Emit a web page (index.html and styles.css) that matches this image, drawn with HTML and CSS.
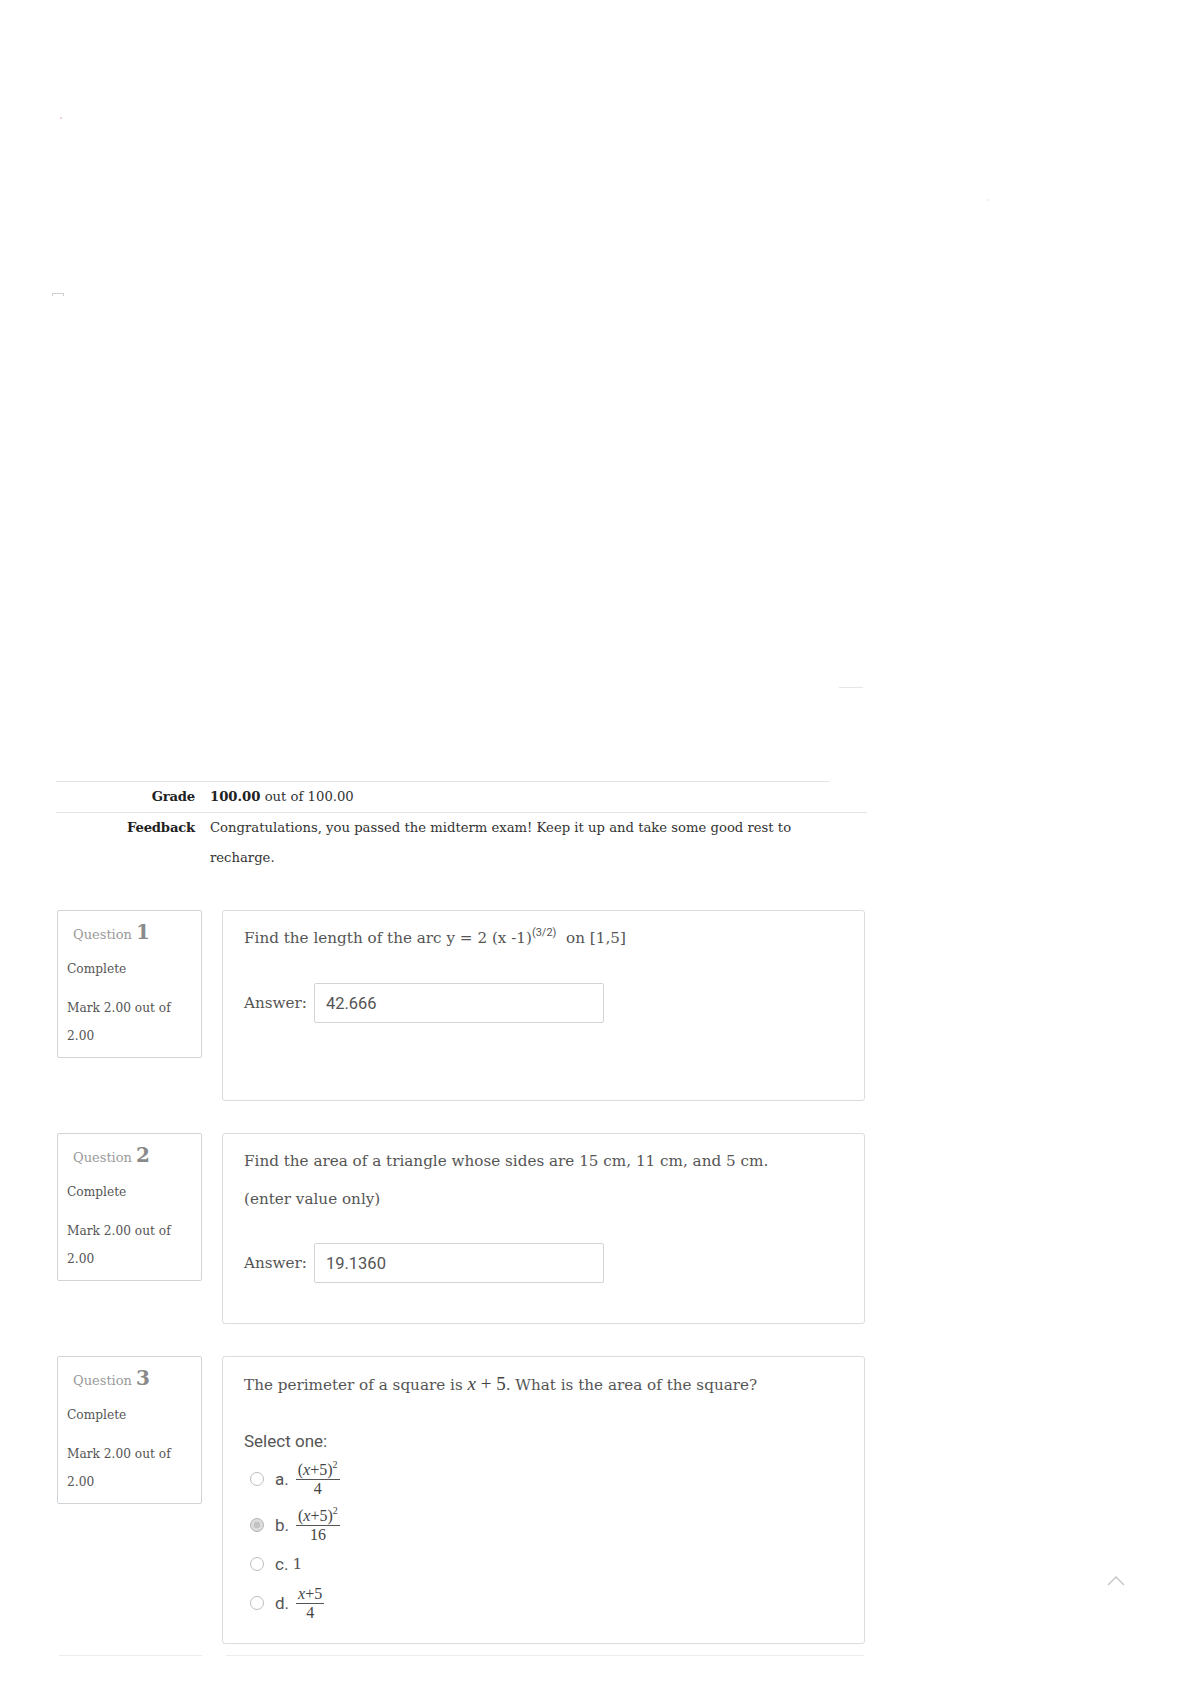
FILE: index.html
```html
<!DOCTYPE html>
<html lang="en">
<head>
<meta charset="utf-8">
<title>Quiz review</title>
<link rel="stylesheet" href="styles.css">
</head>
<body>
<div class="page">
  <div class="blank">
    <span class="mk mk-pink"></span>
    <span class="mk mk-dot"></span>
    <span class="mk mk-bracket"></span>
    <span class="mk mk-line"></span>
  </div>

  <div class="summary">
    <div class="summary-rule"></div>
    <div class="srow srow-first">
      <div class="sth">Grade</div>
      <div class="std"><b>100.00</b> out of 100.00</div>
    </div>
    <div class="srow">
      <div class="sth">Feedback</div>
      <div class="std">Congratulations, you passed the midterm exam! Keep it up and take some good rest to<br>recharge.</div>
    </div>
  </div>

  <div class="que">
    <div class="info">
      <h3 class="qno">Question <span class="qnum">1</span></h3>
      <div class="state">Complete</div>
      <div class="grade">Mark 2.00 out of<br>2.00</div>
    </div>
    <div class="content">
      <p class="qtext">Find the length of the arc y = 2 (x -1)<sup class="sup">(3/2)</sup>&nbsp; on [1,5]</p>
      <div class="answer">
        <span class="ans-label">Answer:</span>
        <div class="ans-input">42.666</div>
      </div>
    </div>
  </div>

  <div class="que">
    <div class="info">
      <h3 class="qno">Question <span class="qnum">2</span></h3>
      <div class="state">Complete</div>
      <div class="grade">Mark 2.00 out of<br>2.00</div>
    </div>
    <div class="content">
      <p class="qtext">Find the area of a triangle whose sides are 15 cm, 11 cm, and 5 cm.</p>
      <p class="qtext qtext-next">(enter value only)</p>
      <div class="answer answer-tight">
        <span class="ans-label">Answer:</span>
        <div class="ans-input">19.1360</div>
      </div>
    </div>
  </div>

  <div class="que">
    <div class="info">
      <h3 class="qno">Question <span class="qnum">3</span></h3>
      <div class="state">Complete</div>
      <div class="grade">Mark 2.00 out of<br>2.00</div>
    </div>
    <div class="content content-mc">
      <p class="qtext">The perimeter of a square is <span class="math"><i>x</i> + 5</span>. What is the area of the square?</p>
      <div class="prompt">Select one:</div>
      <div class="options">
        <div class="opt">
          <span class="radio"></span>
          <span class="optlbl">a.</span>
          <span class="frac"><span class="num">(<i>x</i>+5)<sup class="sq">2</sup></span><span class="den">4</span></span>
        </div>
        <div class="opt">
          <span class="radio radio-on"></span>
          <span class="optlbl">b.</span>
          <span class="frac"><span class="num">(<i>x</i>+5)<sup class="sq">2</sup></span><span class="den">16</span></span>
        </div>
        <div class="opt opt-plain">
          <span class="radio"></span>
          <span class="optlbl">c.</span>
          <span class="plainval">1</span>
        </div>
        <div class="opt">
          <span class="radio"></span>
          <span class="optlbl">d.</span>
          <span class="frac"><span class="num"><i>x</i>+5</span><span class="den">4</span></span>
        </div>
      </div>
    </div>
  </div>

  <div class="tail">
    <div class="tail-a"></div>
    <div class="tail-b"></div>
  </div>
</div>

<a class="backtop" href="#" aria-label="Back to top">
  <svg width="20" height="14" viewBox="0 0 20 14"><polyline points="2,12 10,4 18,12" fill="none" stroke="#c4c4c4" stroke-width="1.4"/></svg>
</a>
</body>
</html>
```

FILE: styles.css
```css
html, body {
  margin: 0;
  padding: 0;
  background: #fff;
}

body {
  font-family: "DejaVu Serif", "Liberation Serif", serif;
  color: #444;
}

.page {
  margin-left: 56px;
  width: 811px;
}

/* blank header area with stray marks */
.blank {
  position: relative;
  height: 781px;
}

.mk {
  position: absolute;
  display: block;
}

.mk-pink {
  left: 4px;
  top: 117px;
  width: 2px;
  height: 2px;
  background: #f1cfd6;
}

.mk-dot {
  left: 931px;
  top: 199px;
  width: 2px;
  height: 2px;
  background: #efefef;
}

.mk-bracket {
  left: -4px;
  top: 293px;
  width: 10px;
  height: 2px;
  border: 1px solid #cfcfcf;
  border-bottom: none;
}

.mk-line {
  left: 783px;
  top: 687px;
  width: 24px;
  height: 1px;
  background: #e6e6e6;
}

/* summary table */
.summary {
  font-size: 13.2px;
  color: #333;
}

.summary-rule {
  width: 773px;
  border-top: 1px solid #e3e3e3;
}

.srow {
  display: flex;
  line-height: 30px;
}

.srow-first {
  border-bottom: 1px solid #e3e3e3;
}

.sth {
  width: 139px;
  flex: none;
  text-align: right;
  font-weight: bold;
  color: #222;
  letter-spacing: -0.2px;
}

.std {
  padding-left: 15px;
}

.std b {
  color: #222;
}

/* question blocks */
.que {
  display: flex;
  gap: 20px;
  margin-top: 32px;
}

.summary + .que {
  margin-top: 37px;
}

.info {
  width: 145px;
  flex: none;
  box-sizing: border-box;
  margin-left: 1px;
  border: 1px solid #cfd4d9;
  border-radius: 2px;
  padding: 6px 9px 7px;
  align-self: flex-start;
  font-size: 12.2px;
  color: #555;
}

.qno {
  margin: 0;
  padding-left: 6px;
  line-height: 30px;
  font-size: 13px;
  font-weight: normal;
  color: #9a9a9a;
}

.qnum {
  font-size: 20px;
  font-weight: bold;
  color: #8a8a8a;
}

.state {
  margin-top: 5px;
  line-height: 28px;
}

.grade {
  margin-top: 11px;
  line-height: 28px;
}

.content {
  width: 643px;
  box-sizing: border-box;
  min-height: 191px;
  border: 1px solid #dcdcdc;
  border-radius: 3px;
  padding: 12px 20px 16px 21px;
  font-size: 15.2px;
  color: #555;
}

.content-mc {
  padding-bottom: 17px;
}

.qtext {
  margin: 0;
  line-height: 30px;
}

.qtext-next {
  margin-top: 8px;
}

.sup {
  font-family: Roboto, "Liberation Sans", sans-serif;
  font-size: 11px;
  line-height: 0;
  vertical-align: 7px;
}

.math {
  font-family: "Liberation Serif", serif;
  font-size: 19px;
  color: #444;
}

.answer {
  display: flex;
  align-items: center;
  margin-top: 30px;
}

.answer-tight {
  margin-top: 29px;
}

.ans-label {
  line-height: 30px;
}

.ans-input {
  width: 290px;
  height: 40px;
  box-sizing: border-box;
  margin-left: 7px;
  border: 1px solid #d4d4d4;
  border-radius: 2px;
  padding: 0 11px;
  display: flex;
  align-items: center;
  font-family: Roboto, "Liberation Sans", sans-serif;
  font-size: 16.5px;
  color: #555;
}

.prompt {
  margin-top: 26px;
  line-height: 30px;
  font-family: Roboto, "Liberation Sans", sans-serif;
  font-size: 17px;
  color: #555;
}

.opt {
  display: flex;
  align-items: center;
  height: 46px;
}

.opt-plain {
  height: 32px;
}

.radio {
  width: 14px;
  height: 14px;
  box-sizing: border-box;
  flex: none;
  margin-left: 6px;
  margin-right: 11px;
  border: 1px solid #bdbdbd;
  border-radius: 50%;
  background: #fff;
}

.radio-on {
  border-color: #b3b3b3;
  background: radial-gradient(circle, #c2c2c2 0 3px, #dcdcdc 3.6px);
}

.optlbl {
  font-family: Roboto, "Liberation Sans", sans-serif;
  font-size: 17px;
  color: #555;
  margin-right: 7px;
}

.plainval {
  font-size: 15.5px;
  margin-left: -3px;
}

.frac {
  display: inline-flex;
  flex-direction: column;
  align-items: center;
  font-family: "Liberation Serif", serif;
  font-size: 16px;
  color: #444;
}

.num {
  padding: 0 2px 1px;
  border-bottom: 1px solid #555;
  line-height: 16px;
}

.den {
  line-height: 17px;
}

.sq {
  font-size: 10px;
  line-height: 0;
  vertical-align: 7px;
}

/* partial next question edges */
.tail {
  display: flex;
  margin-top: 11px;
}

.tail-a {
  width: 143px;
  margin-left: 3px;
  border-top: 1px solid #ececec;
}

.tail-b {
  width: 638px;
  margin-left: 24px;
  border-top: 1px solid #ececec;
}

.backtop {
  position: fixed;
  left: 1106px;
  top: 1573px;
  display: block;
  width: 20px;
  height: 14px;
}

.backtop svg {
  display: block;
}
```
